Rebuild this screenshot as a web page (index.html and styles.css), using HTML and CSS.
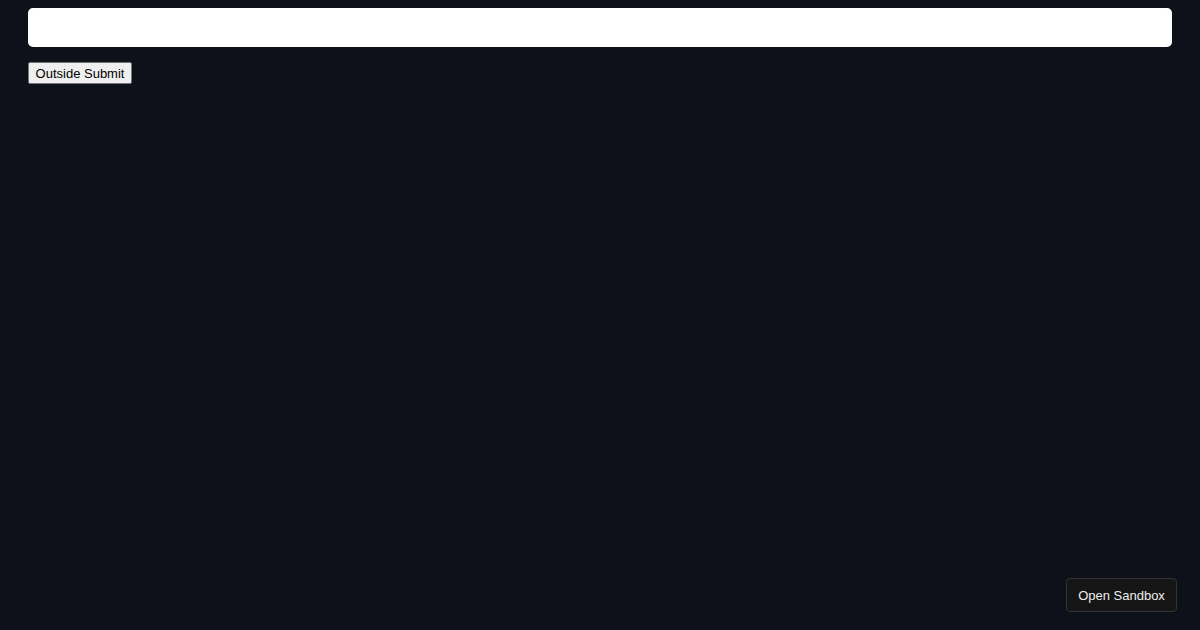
FILE: index.html
```html
<!DOCTYPE html>
<html>
<head>
<meta charset="utf-8">
<link rel="stylesheet" href="styles.css">
</head>
<body>
<main class="page">
  <input class="field" type="text">
  <div class="actions"><button class="outside-btn" type="button">Outside Submit</button></div>
</main>
<button class="sandbox-btn" type="button">Open Sandbox</button>
</body>
</html>
```
FILE: styles.css
```css
html, body {
  margin: 0;
  padding: 0;
  background: #0e101a;
  height: 100%;
}
.page {
  padding: 8px 28px;
  display: flex;
  flex-direction: column;
  gap: 15px;
  align-items: flex-start;
}
.field {
  box-sizing: border-box;
  width: 100%;
  height: 39px;
  border: none;
  border-radius: 5px;
  background: #ffffff;
  margin: 0;
}
.actions {
  display: flex;
}
.outside-btn {
  font-family: "Liberation Sans", Arial, sans-serif;
  font-size: 13px;
  height: 22px;
  width: 104px;
  padding: 0;
  margin: 0;
  background: #efefef;
  color: #000;
  border: 1px solid #767676;
  border-radius: 2px;
  white-space: nowrap;
}
.sandbox-btn {
  position: fixed;
  right: 23px;
  bottom: 18px;
  width: 111px;
  height: 34px;
  box-sizing: border-box;
  background: #151515;
  color: #eeeeee;
  border: 1px solid #333333;
  border-radius: 4px;
  font-family: "Liberation Sans", Arial, sans-serif;
  font-size: 13px;
  padding: 0;
  white-space: nowrap;
}
```
